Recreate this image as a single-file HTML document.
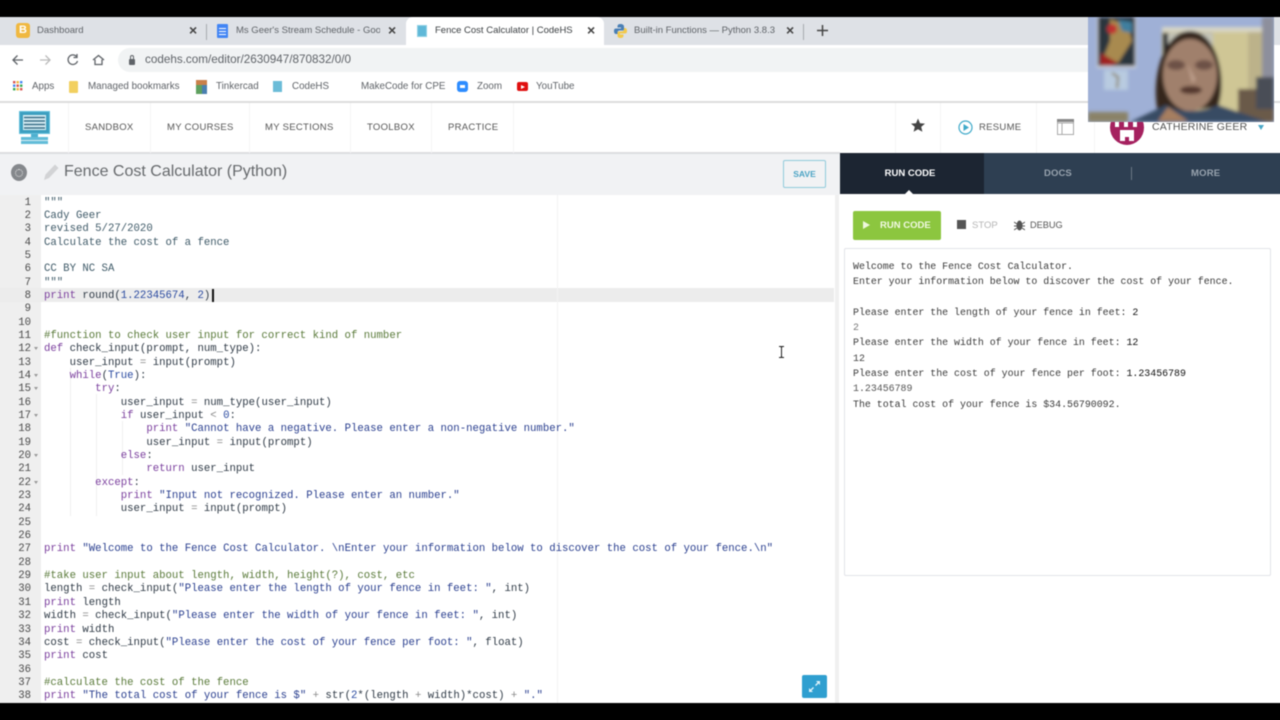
<!DOCTYPE html>
<html><head><meta charset="utf-8">
<style>
html,body{margin:0;padding:0;background:#000;}
#p{position:relative;width:1280px;height:720px;overflow:hidden;background:#000;font-family:"Liberation Sans",sans-serif;}
#s{position:absolute;inset:0;filter:blur(.4px);}
.a{position:absolute;white-space:nowrap;}
.t{font-size:9.5px;color:#5f6368;top:24px;line-height:13px;}
.x{font-size:14px;color:#444;top:22px;line-height:16px;font-weight:bold;}
.b{font-size:9.8px;color:#5f6368;top:80px;line-height:13px;}
.n{font-size:9.5px;color:#555;top:121px;line-height:13px;letter-spacing:.3px;}
.d{width:1px;top:103px;height:50px;background:#f5f5f5;}
.f{width:0;height:0;left:34px;border-top:3px solid #999;border-left:2px solid transparent;border-right:2px solid transparent;}
.i{width:1px;background:#efefef;}
pre{margin:0;font-family:"Liberation Mono",monospace;}
#c{position:absolute;left:44px;top:196.5px;font-size:10.67px;line-height:13.35px;color:#2f3a46;}
#g{position:absolute;left:0;width:31px;top:196.5px;font-family:"Liberation Mono",monospace;font-size:10.67px;line-height:13.35px;color:#4a4a4a;text-align:right;}
#o{position:absolute;left:853px;top:258.5px;font-size:9.92px;line-height:15.35px;color:#3a3a3a;}
.k{color:#7a3e9d}.s{color:#2a3f8f}.m{color:#5a7a3a}.q{color:#3f5a68}.v{color:#2a4aa0}.u{color:#888}
</style></head><body>
<div id="p"><div id="s">
<!-- tabstrip -->
<div class="a" style="left:-5px;top:17px;width:1290px;height:28px;background:#dee1e6"></div>
<div class="a" style="left:406px;top:17px;width:198px;height:28px;background:#fff;border-radius:7px 7px 0 0"></div>
<div class="a" style="left:16px;top:23px;width:14px;height:15px;background:#f0b840;border-radius:3px;color:#fff;font-size:11px;font-weight:bold;line-height:15px;text-align:center">B</div>
<div class="a t" style="left:37px">Dashboard</div>
<div class="a x" style="left:189px">×</div>
<div class="a" style="left:206px;top:24px;width:1px;height:16px;background:#a8abb0"></div>
<div class="a" style="left:217px;top:24px;width:11px;height:14px;background:#4285f4;border-radius:1px"></div>
<div class="a" style="left:219px;top:28px;width:7px;height:1px;background:#fff;box-shadow:0 3px #fff,0 6px #fff"></div>
<div class="a t" style="left:236px;width:144px;overflow:hidden">Ms Geer's Stream Schedule - Goo</div>
<div class="a x" style="left:388px">×</div>
<div class="a" style="left:417px;top:25px;width:10px;height:12px;background:#5fb8d8;border:1px solid #8fd0e4;box-sizing:border-box"></div>
<div class="a t" style="left:435px;color:#3c4043">Fence Cost Calculator | CodeHS</div>
<div class="a x" style="left:587px">×</div>
<svg class="a" style="left:614px;top:24px" width="13" height="14" viewBox="0 0 13 14"><path d="M6.5 0C3.5 0 3.5 1.5 3.5 3.5H7V4.500H2C0 4.500 0 6 0 7.500S1 10 2 10H3.500V8.500C3.500 7 4.500 6.500 6 6.500H9C10 6.500 10 5.500 10 4.500V2.500C10 1 8.500 0 6.500 0Z" fill="#4a7fb5"/><path d="M6.500 14C9.500 14 9.500 12.500 9.500 10.500H6V9.500H11C13 9.500 13 8 13 6.500S12 4 11 4H10V5.500C10 7 8.500 7.500 7 7.500H4.500C3.500 7.500 3.500 8.500 3.500 9.500V11.500C3.500 13 4.500 14 6.500 14Z" fill="#f2c94c"/></svg>
<div class="a t" style="left:634px;width:146px;overflow:hidden">Built-in Functions — Python 3.8.3</div>
<div class="a x" style="left:786px">×</div>
<div class="a" style="left:803px;top:24px;width:1px;height:16px;background:#a8abb0"></div>
<svg class="a" style="left:817px;top:25px" width="11" height="11"><path d="M5.500 0V11M0 5.500H11" stroke="#444" stroke-width="1.500"/></svg>
<!-- toolbar -->
<div class="a" style="left:-5px;top:45px;width:1290px;height:56px;background:#fff"></div>
<div class="a" style="left:118px;top:48px;width:1000px;height:24px;background:#f1f3f4;border-radius:12px 0 0 12px"></div>
<svg class="a" style="left:11px;top:52px" width="95" height="16" fill="none" stroke="#5f6368" stroke-width="1.300"><path d="M12 8H2M6.500 3.500L2 8l4.500 4.500"/><path d="M29 8H39M34.500 3.500L39 8l-4.500 4.500" stroke="#bbb"/><path d="M65.500 4.500A4.800 4.800 0 1 0 66.500 9M66 2V5.500H62.500"/><path d="M82 8l5.500-4.500L93 8M84 7.500V12.500H91V7.500" /></svg>
<div class="a" style="left:129px;top:59px;width:6px;height:6px;background:#5f6368;border-radius:1px"></div>
<div class="a" style="left:130px;top:55px;width:4px;height:4px;border:1px solid #5f6368;border-bottom:0;border-radius:3px 3px 0 0;box-sizing:border-box"></div>
<div class="a" style="left:145px;top:53px;font-size:11.700px;line-height:13px;color:#5f6368">codehs.com/editor/2630947/870832/0/0</div>
<!-- bookmarks -->
<svg class="a" style="left:13px;top:81px" width="10" height="10"><g fill="#d9534f"><rect width="2.400" height="2.400"/></g><rect x="3.500" width="2.400" height="2.400" fill="#f0b840"/><rect x="7" width="2.400" height="2.400" fill="#4285f4"/><rect y="3.500" width="2.400" height="2.400" fill="#4285f4"/><rect x="3.500" y="3.500" width="2.400" height="2.400" fill="#d9534f"/><rect x="7" y="3.500" width="2.400" height="2.400" fill="#34a853"/><rect y="7" width="2.400" height="2.400" fill="#34a853"/><rect x="3.500" y="7" width="2.400" height="2.400" fill="#f0b840"/><rect x="7" y="7" width="2.400" height="2.400" fill="#d9534f"/></svg>
<div class="a b" style="left:32px">Apps</div>
<div class="a" style="left:69px;top:81px;width:9px;height:12px;background:#f2d060;border-radius:1px"></div>
<div class="a b" style="left:88px">Managed bookmarks</div>
<div class="a" style="left:196px;top:80px;width:11px;height:5px;background:#c9804a"></div><div class="a" style="left:196px;top:85px;width:6px;height:9px;background:#5fa05f"></div><div class="a" style="left:202px;top:85px;width:5px;height:9px;background:#4a80b0"></div>
<div class="a b" style="left:216px">Tinkercad</div>
<div class="a" style="left:273px;top:81px;width:9px;height:11px;background:#6bbcd8"></div>
<div class="a b" style="left:292px">CodeHS</div>
<div class="a b" style="left:361px">MakeCode for CPE</div>
<div class="a" style="left:457px;top:81px;width:11px;height:11px;background:#2d8cff;border-radius:3px"></div>
<div class="a" style="left:460px;top:85px;width:5px;height:3px;background:#fff"></div>
<div class="a b" style="left:477px">Zoom</div>
<div class="a" style="left:517px;top:82px;width:11px;height:9px;background:#e01010;border-radius:2px"></div>
<div class="a" style="left:521px;top:84.500px;width:0;height:0;border-left:4px solid #fff;border-top:2px solid transparent;border-bottom:2px solid transparent"></div>
<div class="a b" style="left:536px">YouTube</div>
<div class="a" style="left:-5px;top:101px;width:1290px;height:2px;background:#dcdcdc"></div>
<!-- nav -->
<div class="a" style="left:-5px;top:103px;width:1290px;height:50px;background:#fff"></div>
<div class="a" style="left:-5px;top:152px;width:845px;height:2px;background:#dcdde0"></div>
<svg class="a" style="left:19px;top:111px" width="31" height="33"><rect x=".5" y=".5" width="30" height="22" fill="#3d9fc0" stroke="#62c0dc"/><rect x="4" y="4" width="23" height="15" fill="#d8eef4"/><path d="M5 6.500H26M5 10H26M5 13.500H26M5 17H26" stroke="#3a6f88" stroke-width="1.600"/><rect x="12" y="23" width="7" height="3" fill="#4fb0cf"/><rect x="2" y="26" width="27" height="7" fill="#62bcd8"/><path d="M2 29.500H29" stroke="#d8eef4"/></svg>
<div class="a d" style="left:68px"></div><div class="a d" style="left:150px"></div><div class="a d" style="left:249px"></div><div class="a d" style="left:350px"></div><div class="a d" style="left:431px"></div><div class="a d" style="left:513px"></div>
<div class="a d" style="left:895px"></div><div class="a d" style="left:940px"></div><div class="a d" style="left:1036px"></div><div class="a d" style="left:1094px"></div>
<div class="a n" style="left:85px">SANDBOX</div>
<div class="a n" style="left:167px">MY COURSES</div>
<div class="a n" style="left:265px">MY SECTIONS</div>
<div class="a n" style="left:367px">TOOLBOX</div>
<div class="a n" style="left:448px">PRACTICE</div>
<svg class="a" style="left:911px;top:118px" width="14" height="14"><path d="M7 .5L9 5.200L14 5.600L10.200 8.900L11.400 13.800L7 11.200L2.600 13.800L3.800 8.900L0 5.600L5 5.200Z" fill="#444"/></svg>
<svg class="a" style="left:958px;top:120px" width="15" height="15"><circle cx="7.500" cy="7.500" r="6.500" fill="none" stroke="#3fa9c9" stroke-width="1.200"/><path d="M5.500 4L11 7.500L5.500 11Z" fill="#3fa9c9"/></svg>
<div class="a n" style="left:979px">RESUME</div>
<svg class="a" style="left:1057px;top:119px" width="17" height="17" fill="none" stroke="#aaa"><rect x=".5" y=".5" width="16" height="15"/><path d="M.5 4H16.500M5 4V15.500"/><rect x="0" y="0" width="17" height="3" fill="#888" stroke="none"/></svg>
<div class="a" style="left:1110px;top:110px;width:34px;height:35px;background:#a5215f;border-radius:50%"></div>
<div class="a" style="left:1115px;top:122px;width:4px;height:5px;background:#fff;box-shadow:9px 0 #fff,18px 0 #fff"></div>
<div class="a" style="left:1120px;top:130px;width:14px;height:11px;background:#fff"></div>
<div class="a" style="left:1125px;top:137px;width:4px;height:4px;background:#a5215f"></div>
<div class="a" style="left:1152px;top:120px;font-size:10.500px;line-height:14px;color:#555;letter-spacing:.2px">CATHERINE GEER</div>
<div class="a" style="left:1258px;top:125px;width:0;height:0;border-top:5px solid #4aa8c8;border-left:3.500px solid transparent;border-right:3.500px solid transparent"></div>
<!-- title bar -->
<div class="a" style="left:-5px;top:154px;width:845px;height:41px;background:#f1f2f4"></div>
<div class="a" style="left:11px;top:164px;width:16px;height:17px;background:#85888c;border-radius:50%"></div>
<div class="a" style="left:15px;top:168.500px;width:8px;height:8px;border:1.500px dotted #e8e8e8;border-radius:50%;box-sizing:border-box"></div>
<svg class="a" style="left:43px;top:163px" width="17" height="18"><path d="M1 17L2.500 11.500L12 1.500L15.500 5L6 15Z" fill="#d2d3d5"/></svg>
<div class="a" style="left:64px;top:163px;font-size:16px;line-height:18px;color:#66696c">Fence Cost Calculator (Python)</div>
<div class="a" style="left:783px;top:160px;width:43px;height:28px;box-sizing:border-box;border:1px solid #8fcadb;border-radius:2px;color:#4aa3c4;font-size:8.500px;font-weight:bold;line-height:26px;text-align:center">SAVE</div>
<!-- editor -->
<div class="a" style="left:-5px;top:195px;width:845px;height:508px;background:#fff"></div>
<div class="a" style="left:-5px;top:195px;width:46px;height:508px;background:#efefef"></div>
<div class="a" style="left:-5px;top:288px;width:839px;height:14px;background:#ececec"></div>
<div class="a" style="left:557px;top:195px;width:1px;height:508px;background:#f3f3f3"></div>
<div class="a" style="left:835px;top:195px;width:4px;height:508px;background:#f0f0f0"></div>
<div class="a i" style="left:70px;top:368px;height:148px"></div>
<div class="a i" style="left:96px;top:394px;height:122px"></div>
<div class="a i" style="left:122px;top:421px;height:54px"></div>
<div class="a f" style="top:347px"></div><div class="a f" style="top:374px"></div><div class="a f" style="top:387px"></div><div class="a f" style="top:414px"></div><div class="a f" style="top:454px"></div><div class="a f" style="top:481px"></div>
<div class="a" style="left:212px;top:288.500px;width:1.500px;height:13px;background:#111"></div>
<pre id="g" style="width:31px">1
2
3
4
5
6
7
8
9
10
11
12
13
14
15
16
17
18
19
20
21
22
23
24
25
26
27
28
29
30
31
32
33
34
35
36
37
38</pre>
<pre id="c"><span class="q">"""</span>
<span class="q">Cady Geer</span>
<span class="q">revised 5/27/2020</span>
<span class="q">Calculate the cost of a fence</span>

<span class="q">CC BY NC SA</span>
<span class="q">"""</span>
<span class="k">print</span> round(<span class="v">1.22345674</span>, <span class="v">2</span>)


<span class="m">#function to check user input for correct kind of number</span>
<span class="k">def</span> check_input(prompt, num_type):
    user_input <span class="u">=</span> input(prompt)
    <span class="k">while</span>(<span class="v">True</span>):
        <span class="k">try</span>:
            user_input <span class="u">=</span> num_type(user_input)
            <span class="k">if</span> user_input <span class="u">&lt;</span> <span class="v">0</span>:
                <span class="k">print</span> <span class="s">"Cannot have a negative. Please enter a non-negative number."</span>
                user_input <span class="u">=</span> input(prompt)
            <span class="k">else</span>:
                <span class="k">return</span> user_input
        <span class="k">except</span>:
            <span class="k">print</span> <span class="s">"Input not recognized. Please enter an number."</span>
            user_input <span class="u">=</span> input(prompt)


<span class="k">print</span> <span class="s">"Welcome to the Fence Cost Calculator. \nEnter your information below to discover the cost of your fence.\n"</span>

<span class="m">#take user input about length, width, height(?), cost, etc</span>
length <span class="u">=</span> check_input(<span class="s">"Please enter the length of your fence in feet: "</span>, int)
<span class="k">print</span> length
width <span class="u">=</span> check_input(<span class="s">"Please enter the width of your fence in feet: "</span>, int)
<span class="k">print</span> width
cost <span class="u">=</span> check_input(<span class="s">"Please enter the cost of your fence per foot: "</span>, float)
<span class="k">print</span> cost

<span class="m">#calculate the cost of the fence</span>
<span class="k">print</span> <span class="s">"The total cost of your fence is $"</span> <span class="u">+</span> str(<span class="v">2</span>*(length <span class="u">+</span> width)*cost) <span class="u">+</span> <span class="s">"."</span></pre>
<div class="a" style="left:802px;top:675px;width:25px;height:23px;background:#2f9fd0;border-radius:2px"></div>
<svg class="a" style="left:808px;top:680px" width="13" height="13"><path d="M8 1H12V5L10.500 3.500L8 6L7 5L9.500 2.500ZM5 12H1V8L2.500 9.500L5 7L6 8L3.500 10.500Z" fill="#dff2fa"/></svg>
<!-- right panel -->
<div class="a" style="left:840px;top:153px;width:445px;height:550px;background:#fff"></div>
<div class="a" style="left:840px;top:153px;width:445px;height:41px;background:#2e3f52"></div>
<div class="a" style="left:840px;top:153px;width:144px;height:41px;background:#1c2532"></div>
<div class="a" style="left:905px;top:190px;width:0;height:0;border-bottom:4px solid #fff;border-left:4px solid transparent;border-right:4px solid transparent"></div>
<div class="a" style="left:840px;top:167px;width:140px;text-align:center;font-size:9.500px;line-height:13px;font-weight:bold;color:#fff">RUN CODE</div>
<div class="a" style="left:1044px;top:167px;font-size:9.500px;line-height:13px;font-weight:bold;color:#98a3ae;letter-spacing:.1px">DOCS</div>
<div class="a" style="left:1131px;top:167px;width:1px;height:13px;background:#6b7885"></div>
<div class="a" style="left:1191px;top:167px;font-size:9.500px;line-height:13px;font-weight:bold;color:#98a3ae;letter-spacing:.2px">MORE</div>
<div class="a" style="left:853px;top:211px;width:88px;height:29px;background:#8cc63f;border-radius:2px"></div>
<div class="a" style="left:863px;top:221px;width:0;height:0;border-left:7px solid #eef8dd;border-top:4.500px solid transparent;border-bottom:4.500px solid transparent"></div>
<div class="a" style="left:880px;top:219px;font-size:9.500px;line-height:13px;font-weight:bold;color:#f2f9e4">RUN CODE</div>
<div class="a" style="left:957px;top:220px;width:9px;height:9px;background:#555"></div>
<div class="a" style="left:972px;top:219px;font-size:9.500px;line-height:13px;color:#b5b5b5">STOP</div>
<svg class="a" style="left:1014px;top:219px" width="11" height="12"><ellipse cx="5.500" cy="6.500" rx="3" ry="5" fill="#555"/><path d="M0 3L3 5M11 3L8 5M0 7H3M11 7H8M0 11L3 9M11 11L8 9" stroke="#555"/></svg>
<div class="a" style="left:1030px;top:219px;font-size:9.200px;line-height:13px;color:#555">DEBUG</div>
<div class="a" style="left:844px;top:248px;width:427px;height:328px;border:1px solid #e2e3e8;box-sizing:border-box;border-radius:2px;background:#fff"></div>
<pre id="o">Welcome to the Fence Cost Calculator.
Enter your information below to discover the cost of your fence.

Please enter the length of your fence in feet: <b style="font-weight:normal;color:#111">2</b>
<span style="color:#777">2</span>
Please enter the width of your fence in feet: <b style="font-weight:normal;color:#111">12</b>
<span style="color:#444">12</span>
Please enter the cost of your fence per foot: <b style="font-weight:normal;color:#111">1.23456789</b>
<span style="color:#555">1.23456789</span>
The total cost of your fence is $34.56790092.</pre>
<!-- I-beam cursor -->
<svg class="a" style="left:778px;top:346px" width="7" height="12"><path d="M1 .5H3L3.500 1.500L4 .5H6M3.500 1.500V10.500M1 11.500H3L3.500 10.500L4 11.500H6" fill="none" stroke="#222"/></svg>
<!-- webcam -->
<svg class="a" style="left:1088px;top:17px" width="186" height="105" viewBox="0 0 186 105">
<defs><filter id="f"><feGaussianBlur stdDeviation="1.800"/></filter></defs>
<rect width="186" height="105" fill="#9fb0d6"/>
<g filter="url(#f)">
<rect x="174" y="0" width="12" height="105" fill="#8d8f9c"/>
<rect x="9" y="0" width="39" height="51" fill="#d4d6dc"/>
<rect x="10" y="0" width="37" height="49" fill="#2a343e"/>
<path d="M22 2L40 8L44 24L30 46L14 44L22 24Z" fill="#a88a50"/>
<path d="M13 36L30 46L22 49L12 48Z" fill="#a02020"/><circle cx="24" cy="12" r="5" fill="#c03030"/><path d="M30 3L44 5V16L34 14Z" fill="#3f7f9f"/>
<rect x="16" y="53" width="24" height="20" fill="#b8cbe0"/><path d="M24 56L30 60L29 71" stroke="#8a7a50" stroke-width="2" fill="none"/>
<rect x="74" y="10" width="100" height="84" fill="#bcb28a"/>
<rect x="74" y="10" width="100" height="5" fill="#d8d6c6"/>
<rect x="125" y="15" width="35" height="80" fill="#cfc695"/>
<rect x="75" y="16" width="5" height="60" fill="#1f2530"/>
<rect x="80" y="16" width="45" height="14" fill="#c4c4b8"/>
<rect x="150" y="72" width="36" height="33" fill="#6b5a4a"/><rect x="168" y="60" width="18" height="32" fill="#4a4e56"/>
<path d="M0 95H40V105H0Z" fill="#8a8268"/>
<path d="M70 96C62 60 76 14 102 14C128 14 140 60 130 90Z" fill="#35281f"/>
<ellipse cx="102" cy="58" rx="27" ry="36" fill="#a0806c"/>
<ellipse cx="88" cy="48" rx="9" ry="5" fill="#6d5147"/><ellipse cx="116" cy="48" rx="9" ry="5" fill="#6d5147"/>
<path d="M99 46L104 66L108 63Z" fill="#bc9d8a"/><ellipse cx="103" cy="73" rx="11" ry="4" fill="#55392f"/>
<path d="M42 105L78 88C90 96 116 96 130 88L180 105Z" fill="#394c64"/>
<path d="M80 90L100 104H70Z" fill="#a67e60"/>
</g></svg>
<!-- black bars -->
<div class="a" style="left:-5px;top:703px;width:1290px;height:22px;background:#000"></div>
<div class="a" style="left:-5px;top:-5px;width:1290px;height:22px;background:#000"></div>
</div></div>
</body></html>
